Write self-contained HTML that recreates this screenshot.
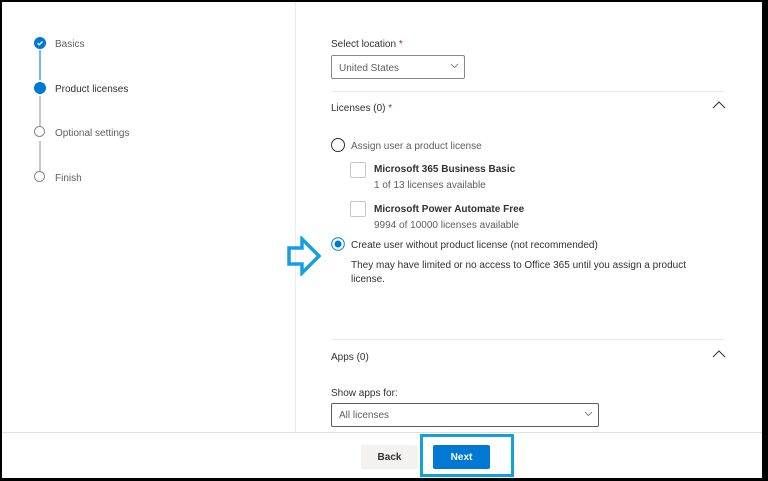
<!DOCTYPE html>
<html><head><style>
body{margin:0;width:768px;height:481px;background:#000;position:relative;overflow:hidden;font-family:"Liberation Sans",sans-serif;}
#w{position:absolute;left:2px;top:2px;width:760px;height:476px;background:#fff;overflow:hidden}
.a{position:absolute;white-space:nowrap;font-size:10px;color:#323130;margin-top:1px}
.ln{position:absolute;background:#e1dfdd;height:1px}
</style></head><body><div id="w">
<div style="position:absolute;left:293px;top:0;width:1px;height:430px;background:#edebe9"></div>
<div style="position:absolute;left:37px;top:48px;width:2px;height:30px;background:#6cb8f6"></div>
<div style="position:absolute;left:37px;top:94px;width:2px;height:30px;background:#c8c6c4"></div>
<div style="position:absolute;left:37px;top:139px;width:2px;height:30px;background:#c8c6c4"></div>
<svg style="position:absolute;left:32px;top:35px" width="12" height="12"><circle cx="6" cy="6" r="6" fill="#0078d4"/><path d="M3.5 6.2l1.7 1.6 3.3-3.3" stroke="#fff" stroke-width="1.3" fill="none"/></svg>
<div style="position:absolute;left:32px;top:80px;width:12px;height:12px;border-radius:50%;background:#0078d4"></div>
<div style="position:absolute;left:32px;top:124px;width:9px;height:9px;border-radius:50%;border:1.5px solid #8a8886"></div>
<div style="position:absolute;left:32px;top:169px;width:9px;height:9px;border-radius:50%;border:1.5px solid #8a8886"></div>
<div class="a" style="left:53px;top:36px;color:#605e5c">Basics</div>
<div class="a" style="left:53px;top:81px">Product licenses</div>
<div class="a" style="left:53px;top:125px;color:#605e5c">Optional settings</div>
<div class="a" style="left:53px;top:170px;color:#605e5c">Finish</div>
<div class="a" style="left:329px;top:36px">Select location <span style="color:#a4262c">*</span></div>
<div style="position:absolute;left:329px;top:53px;width:132px;height:22px;border:1px solid #8a8886;border-radius:2px"></div>
<div class="a" style="left:337px;top:60px;color:#605e5c">United States</div>
<svg style="position:absolute;left:448px;top:61px" width="9" height="6"><path d="M1 1l3.5 3.5 3.5-3.5" stroke="#8a8886" fill="none"/></svg>
<div class="ln" style="left:329px;top:89px;width:394px;background:#edebe9"></div>
<div class="a" style="left:329px;top:100px">Licenses (0) <span style="color:#a4262c">*</span></div>
<svg style="position:absolute;left:710px;top:99px" width="14" height="8"><path d="M1 7l6-6 6 6" stroke="#323130" fill="none"/></svg>
<div style="position:absolute;left:329px;top:136px;width:12px;height:12px;border-radius:50%;border:1px solid #323130"></div>
<div class="a" style="left:349px;top:138px;color:#605e5c">Assign user a product license</div>
<div style="position:absolute;left:348px;top:160px;width:14px;height:14px;border:1px solid #c8c6c4;border-radius:2px"></div>
<div class="a" style="left:372px;top:161px;font-weight:bold">Microsoft 365 Business Basic</div>
<div class="a" style="left:372px;top:177px;color:#605e5c">1 of 13 licenses available</div>
<div style="position:absolute;left:348px;top:199px;width:14px;height:14px;border:1px solid #c8c6c4;border-radius:2px"></div>
<div class="a" style="left:372px;top:201px;font-weight:bold">Microsoft Power Automate Free</div>
<div class="a" style="left:372px;top:217px;color:#605e5c">9994 of 10000 licenses available</div>
<svg style="position:absolute;left:329px;top:235px" width="14" height="14"><circle cx="7" cy="7" r="6.3" fill="none" stroke="#0078d4"/><circle cx="7" cy="7" r="3.5" fill="#0078d4"/></svg>
<div class="a" style="left:349px;top:237px;color:#323130">Create user without product license (not recommended)</div>
<div class="a" style="left:349px;top:257px;color:#323130">They may have limited or no access to Office 365 until you assign a product</div>
<div class="a" style="left:349px;top:271px;color:#323130">license.</div>
<svg style="position:absolute;left:284px;top:234px" width="38" height="40"><path d="M3 12h13V3l17 17-17 17v-9H3z" fill="none" stroke="#13a0e0" stroke-width="3.5" stroke-linejoin="miter"/></svg>
<div class="ln" style="left:329px;top:337px;width:394px;background:#edebe9"></div>
<div class="a" style="left:329px;top:349px">Apps (0)</div>
<svg style="position:absolute;left:710px;top:348px" width="14" height="8"><path d="M1 7l6-6 6 6" stroke="#323130" fill="none"/></svg>
<div class="a" style="left:329px;top:385px">Show apps for:</div>
<div style="position:absolute;left:329px;top:401px;width:266px;height:22px;border:1px solid #605e5c;border-radius:2px"></div>
<div class="a" style="left:337px;top:407px;color:#605e5c">All licenses</div>
<svg style="position:absolute;left:582px;top:409px" width="9" height="6"><path d="M1 1l3.5 3.5 3.5-3.5" stroke="#8a8886" fill="none"/></svg>
<div class="ln" style="left:0;top:430px;width:760px;background:#e1dfdd"></div>
<div style="position:absolute;left:359px;top:443px;width:57px;height:24px;background:#f3f2f1;border-radius:2px;font-size:10px;font-weight:bold;color:#323130;text-align:center;line-height:26px">Back</div>
<div style="position:absolute;left:418px;top:432px;width:88px;height:37px;border:3px solid #13a0e0"></div>
<div style="position:absolute;left:431px;top:443px;width:57px;height:24px;background:#0078d4;border-radius:2px;font-size:10px;font-weight:bold;color:#fff;text-align:center;line-height:26px">Next</div>
</div></body></html>
